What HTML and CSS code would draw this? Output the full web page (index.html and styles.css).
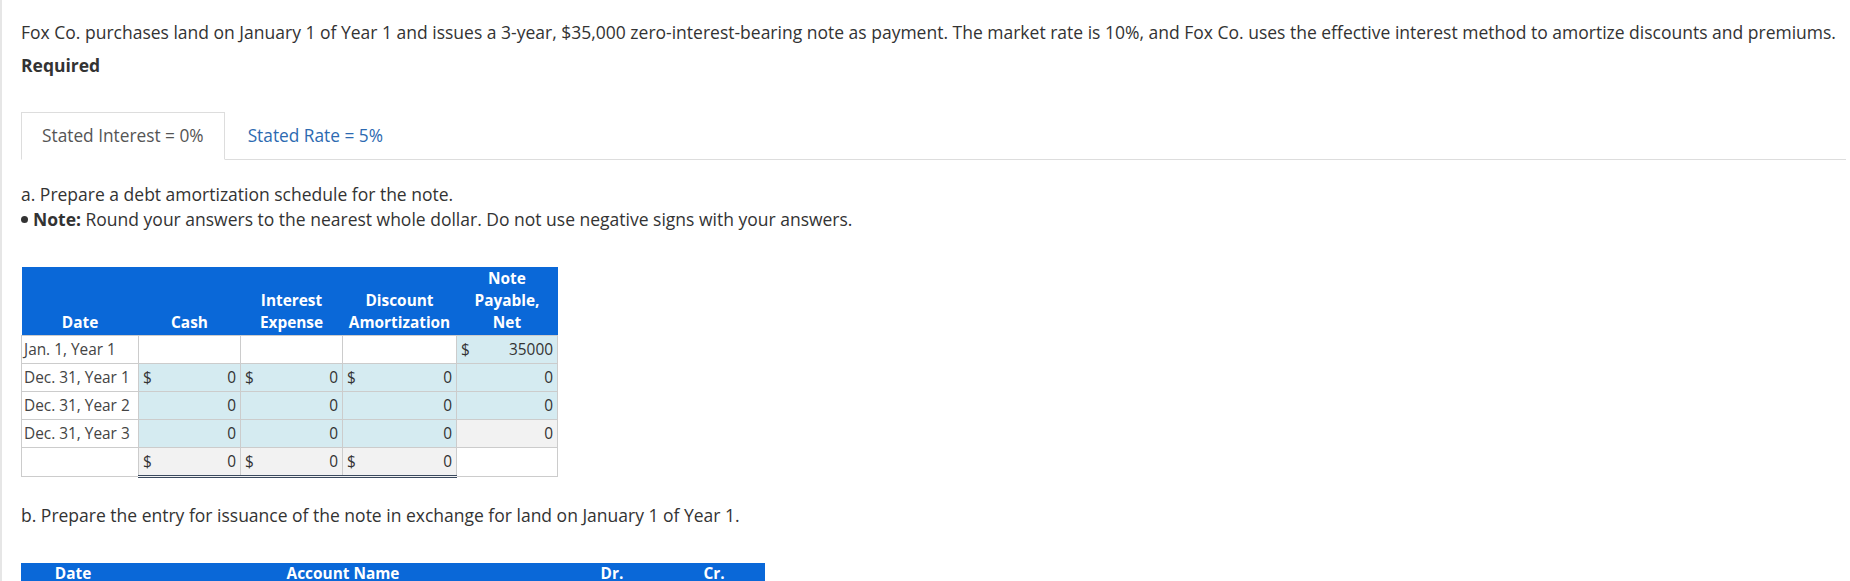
FILE: index.html
```html
<!DOCTYPE html>
<html>
<head>
<meta charset="utf-8">
<link rel="stylesheet" href="styles.css">
</head>
<body>
<div class="page">
  <p class="intro">Fox Co. purchases land on January 1 of Year 1 and issues a 3-year, $35,000 zero-interest-bearing note as payment. The market rate is 10%, and Fox Co. uses the effective interest method to amortize discounts and premiums.</p>
  <p class="required">Required</p>

  <div class="tabs">
    <div class="tab active">Stated Interest = 0%</div>
    <div class="tab">Stated Rate = 5%</div>
  </div>

  <p class="q">a. Prepare a debt amortization schedule for the note.</p>
  <p class="note"><span class="bullet"></span><b>Note:</b> Round your answers to the nearest whole dollar. Do not use negative signs with your answers.</p>

  <table class="sched">
    <colgroup>
      <col class="c-date"><col class="c-cash"><col class="c-int"><col class="c-disc"><col class="c-note">
    </colgroup>
    <thead>
      <tr>
        <th>Date</th>
        <th>Cash</th>
        <th>Interest<br>Expense</th>
        <th>Discount<br>Amortization</th>
        <th>Note<br>Payable,<br>Net</th>
      </tr>
    </thead>
    <tbody>
      <tr>
        <td class="lbl">Jan. 1, Year 1</td>
        <td></td>
        <td></td>
        <td></td>
        <td class="in"><span class="cur">$</span><span class="num">35000</span></td>
      </tr>
      <tr>
        <td class="lbl">Dec. 31, Year 1</td>
        <td class="in"><span class="cur">$</span><span class="num">0</span></td>
        <td class="in"><span class="cur">$</span><span class="num">0</span></td>
        <td class="in"><span class="cur">$</span><span class="num">0</span></td>
        <td class="in"><span class="cur"></span><span class="num">0</span></td>
      </tr>
      <tr>
        <td class="lbl">Dec. 31, Year 2</td>
        <td class="in"><span class="cur"></span><span class="num">0</span></td>
        <td class="in"><span class="cur"></span><span class="num">0</span></td>
        <td class="in"><span class="cur"></span><span class="num">0</span></td>
        <td class="in"><span class="cur"></span><span class="num">0</span></td>
      </tr>
      <tr>
        <td class="lbl">Dec. 31, Year 3</td>
        <td class="in"><span class="cur"></span><span class="num">0</span></td>
        <td class="in"><span class="cur"></span><span class="num">0</span></td>
        <td class="in"><span class="cur"></span><span class="num">0</span></td>
        <td class="calc"><span class="cur"></span><span class="num">0</span></td>
      </tr>
      <tr class="total">
        <td class="lbl"></td>
        <td class="calc sum"><span class="cur">$</span><span class="num">0</span></td>
        <td class="calc sum"><span class="cur">$</span><span class="num">0</span></td>
        <td class="calc sum"><span class="cur">$</span><span class="num">0</span></td>
        <td></td>
      </tr>
    </tbody>
  </table>

  <p class="q qb">b. Prepare the entry for issuance of the note in exchange for land on January 1 of Year 1.</p>

  <table class="journal">
    <colgroup>
      <col class="j-date"><col class="j-acct"><col class="j-dr"><col class="j-cr">
    </colgroup>
    <thead>
      <tr>
        <th>Date</th>
        <th>Account Name</th>
        <th>Dr.</th>
        <th>Cr.</th>
      </tr>
    </thead>
  </table>
</div>
</body>
</html>
```

FILE: styles.css
```css
html, body {
  margin: 0;
  padding: 0;
  background: #fff;
}
body {
  font-family: "Open Sans", "Liberation Sans", sans-serif;
  color: #333;
  font-size: 17.5px;
}
.page {
  border-left: 2px solid #e6e6e6;
  padding: 19px 0 0 19px;
  min-height: 581px;
  box-sizing: border-box;
}
p {
  margin: 0;
  line-height: 26px;
}
.intro {
  white-space: nowrap;
}
.required {
  font-weight: bold;
  margin-top: 7px;
}
.tabs {
  display: flex;
  margin-top: 34px;
  border-bottom: 1px solid #ddd;
  margin-right: 4px;
  font-size: 17.3px;
}
.tab {
  height: 46px;
  line-height: 46px;
  padding: 0 20px;
  color: #2d6ab1;
  margin-bottom: -1px;
  border: 1px solid transparent;
  border-bottom: none;
}
.tab + .tab {
  padding-left: 22px;
}
.tab.active {
  color: #555;
  border-color: #ddd;
  background: #fff;
  border-bottom: 1px solid #fff;
}
.q {
  margin-top: 22px;
  line-height: 25px;
}
.note {
  line-height: 25px;
}
.bullet {
  display: inline-block;
  width: 7px;
  height: 7px;
  border-radius: 50%;
  background: #333;
  margin-right: 5px;
  vertical-align: 3px;
}
.note b {
  font-weight: bold;
}

.sched {
  border-collapse: collapse;
  margin-top: 35px;
  font-size: 15.4px;
  table-layout: fixed;
  width: 536px;
}
.c-date { width: 117px; }
.c-cash { width: 102px; }
.c-int { width: 102px; }
.c-disc { width: 114px; }
.c-note { width: 101px; }

.sched th {
  background: #0a68d8;
  color: #fff;
  font-weight: bold;
  vertical-align: bottom;
  text-align: center;
  line-height: 22px;
  padding: 1px 4px 1px;
}
.sched td {
  border: 1px solid #ccc;
  height: 27px;
  padding: 0 4px;
  line-height: 27px;
  white-space: nowrap;
}
.sched td.lbl {
  padding-left: 2px;
  color: #444;
}
.sched td.in {
  background: #d5ebf1;
}
.sched td.calc {
  background: #f2f2f2;
}
.sched td.sum {
  border-top: 1px solid #111;
  border-bottom: 3px double #3b4a5e;
}
.cur {
  float: left;
}
.num {
  float: right;
}

.qb {
  margin-top: 25px;
}
.journal {
  border-collapse: collapse;
  margin-top: 35px;
  table-layout: fixed;
  width: 744px;
  font-size: 15.4px;
}
.j-date { width: 104px; }
.j-acct { width: 436px; }
.j-dr { width: 102px; }
.j-cr { width: 102px; }
.journal th {
  background: #0a68d8;
  color: #fff;
  font-weight: bold;
  text-align: center;
  line-height: 22px;
  padding: 0 4px 20px;
}
```
